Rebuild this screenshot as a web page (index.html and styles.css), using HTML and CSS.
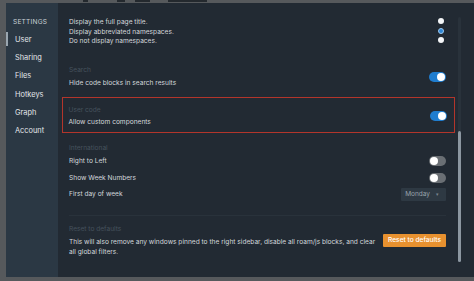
FILE: index.html
```html
<!DOCTYPE html>
<html lang="en">
<head>
  <meta charset="UTF-8" />
  <title>Settings</title>
  <link rel="stylesheet" href="styles.css">
</head>
<body>
  <div class="backdrop">
    <span class="mark" style="width: 5px"></span>
    <span class="mark" style="width: 8px; margin-left: 29px"></span>
    <span class="mark" style="width: 15px; margin-left: 10px"></span>
    <span class="mark" style="width: 39px; margin-left: 18px"></span>
  </div>
  <div class="dialog">
    <nav class="sidebar">
      <div class="sidebar-title">SETTINGS</div>
      <div class="tab active">User</div>
      <div class="tab">Sharing</div>
      <div class="tab">Files</div>
      <div class="tab">Hotkeys</div>
      <div class="tab">Graph</div>
      <div class="tab">Account</div>
    </nav>
    <main class="panel">
      <div class="content">
        <div class="radio-group">
          <div class="radio-row"><span>Display the full page title.</span><span class="radio"></span></div>
          <div class="radio-row"><span>Display abbreviated namespaces.</span><span class="radio checked"></span></div>
          <div class="radio-row"><span>Do not display namespaces.</span><span class="radio"></span></div>
        </div>

        <section class="setting search">
          <div class="setting-text">
            <div class="setting-head">Search</div>
            <div class="setting-label">Hide code blocks in search results</div>
          </div>
          <span class="toggle on"></span>
        </section>

        <section class="setting highlight">
          <div class="setting-text">
            <div class="setting-head">User code</div>
            <div class="setting-label">Allow custom components</div>
          </div>
          <span class="toggle on"></span>
        </section>

        <section class="intl">
          <div class="setting-head">International</div>
          <div class="row"><span>Right to Left</span><span class="toggle"></span></div>
          <div class="row"><span>Show Week Numbers</span><span class="toggle"></span></div>
          <div class="row"><span>First day of week</span><span class="select">Monday <span class="caret">▾</span></span></div>
        </section>

        <section class="reset">
          <div class="setting-head">Reset to defaults</div>
          <div class="reset-row">
            <div class="reset-desc">This will also remove any windows pinned to the right sidebar, disable all roam/js blocks, and clear all global filters.</div>
            <button class="reset-btn">Reset to defaults</button>
          </div>
        </section>
      </div>
      <div class="scrollbar"><div class="thumb"></div></div>
    </main>
  </div>
</body>
</html>
```

FILE: styles.css
```css
body {
  margin: 0;
  height: 281px;
  overflow: hidden;
  background: #56595c;
  font-family: Inter, 'Noto Sans', sans-serif;
  color: #d3d8dc;
}
.backdrop {
  display: flex;
  align-items: flex-start;
  height: 3px;
  padding-left: 83px;
}
.mark {
  height: 2px;
  background: #24292e;
}
.dialog {
  display: flex;
  margin-left: 6px;
  width: 468px;
  height: 274px;
  background: #222a33;
}
.sidebar {
  width: 52px;
  flex: none;
  background: #2b3844;
  padding-top: 14px;
  box-sizing: border-box;
}
.sidebar-title {
  font-size: 6.6px;
  line-height: 10px;
  padding-left: 7px;
  color: #c9d0d6;
  letter-spacing: 0.2px;
  margin-bottom: 3px;
}
.tab {
  display: flex;
  align-items: center;
  height: 18.3px;
  padding-left: 9px;
  font-size: 7.4px;
  color: #e3e7ea;
}
.tab.active {
  padding-left: 0;
}
.tab.active::before {
  content: "";
  width: 2px;
  height: 14px;
  background: #9aa6b0;
  margin-right: 7px;
}
.panel {
  flex: 1;
  display: flex;
}
.content {
  width: 377px;
  padding-left: 11px;
  padding-top: 15px;
  font-size: 6.6px;
}
.radio-row {
  display: flex;
  justify-content: space-between;
  align-items: center;
  height: 9.5px;
  line-height: 9.5px;
}
.radio {
  width: 6px;
  height: 6px;
  border-radius: 50%;
  background: #f4f6f8;
  margin-right: 2px;
  margin-top: -3px;
  box-sizing: border-box;
}
.radio.checked {
  background: #2d86d6;
  border: 1.5px solid #9cc8ee;
}
.setting {
  display: flex;
  justify-content: space-between;
  align-items: center;
}
.setting-head {
  line-height: 10px;
  color: #46525d;
}
.setting-label {
  line-height: 10px;
  margin-top: 3px;
}
.search {
  margin-top: 18.5px;
}
.highlight {
  margin: 9px -9px 0 -7px;
  padding: 6.5px 7.5px 5.5px 5.5px;
  border: 1.5px solid #b3352b;
}
.highlight .setting-label {
  margin-top: 2px;
}
.toggle {
  display: flex;
  align-items: center;
  justify-content: flex-start;
  width: 17px;
  height: 10px;
  border-radius: 5px;
  background: #6a6f74;
  padding: 1px;
  box-sizing: border-box;
}
.toggle::after {
  content: "";
  width: 8px;
  height: 8px;
  border-radius: 50%;
  background: #fff;
}
.toggle.on {
  background: #1f7dcf;
  justify-content: flex-end;
}
.intl {
  margin-top: 10px;
}
.row {
  display: flex;
  justify-content: space-between;
  align-items: center;
  height: 16.5px;
}
.row:first-of-type {
  margin-top: 1px;
}
.select {
  display: flex;
  align-items: center;
  gap: 6px;
  height: 13px;
  padding: 0 7px 0 4px;
  background: #2e3943;
  color: #99a3ac;
  font-size: 6.5px;
  border-radius: 1px;
}
.caret {
  font-size: 5px;
  color: #7b858e;
}
.reset {
  margin-top: 12px;
  padding-top: 8px;
  border-top: 1px solid #29323b;
}
.reset-row {
  display: flex;
  justify-content: space-between;
  align-items: flex-start;
  margin-top: 3px;
}
.reset-desc {
  width: 312px;
  line-height: 10px;
}
.reset-btn {
  margin-top: -3px;
  height: 13px;
  padding: 0 5px;
  border: none;
  border-radius: 1px;
  background: #e8912f;
  color: #fff;
  font-family: Inter, 'Noto Sans', sans-serif;
  font-size: 6.6px;
  font-weight: 500;
}
.scrollbar {
  margin-left: 12px;
  margin-top: 14px;
  width: 3px;
  height: 245px;
  background: #29323b;
  border-radius: 2px;
}
.thumb {
  margin-top: 114px;
  height: 131px;
  background: #8c97a1;
  border-radius: 2px;
}
```
